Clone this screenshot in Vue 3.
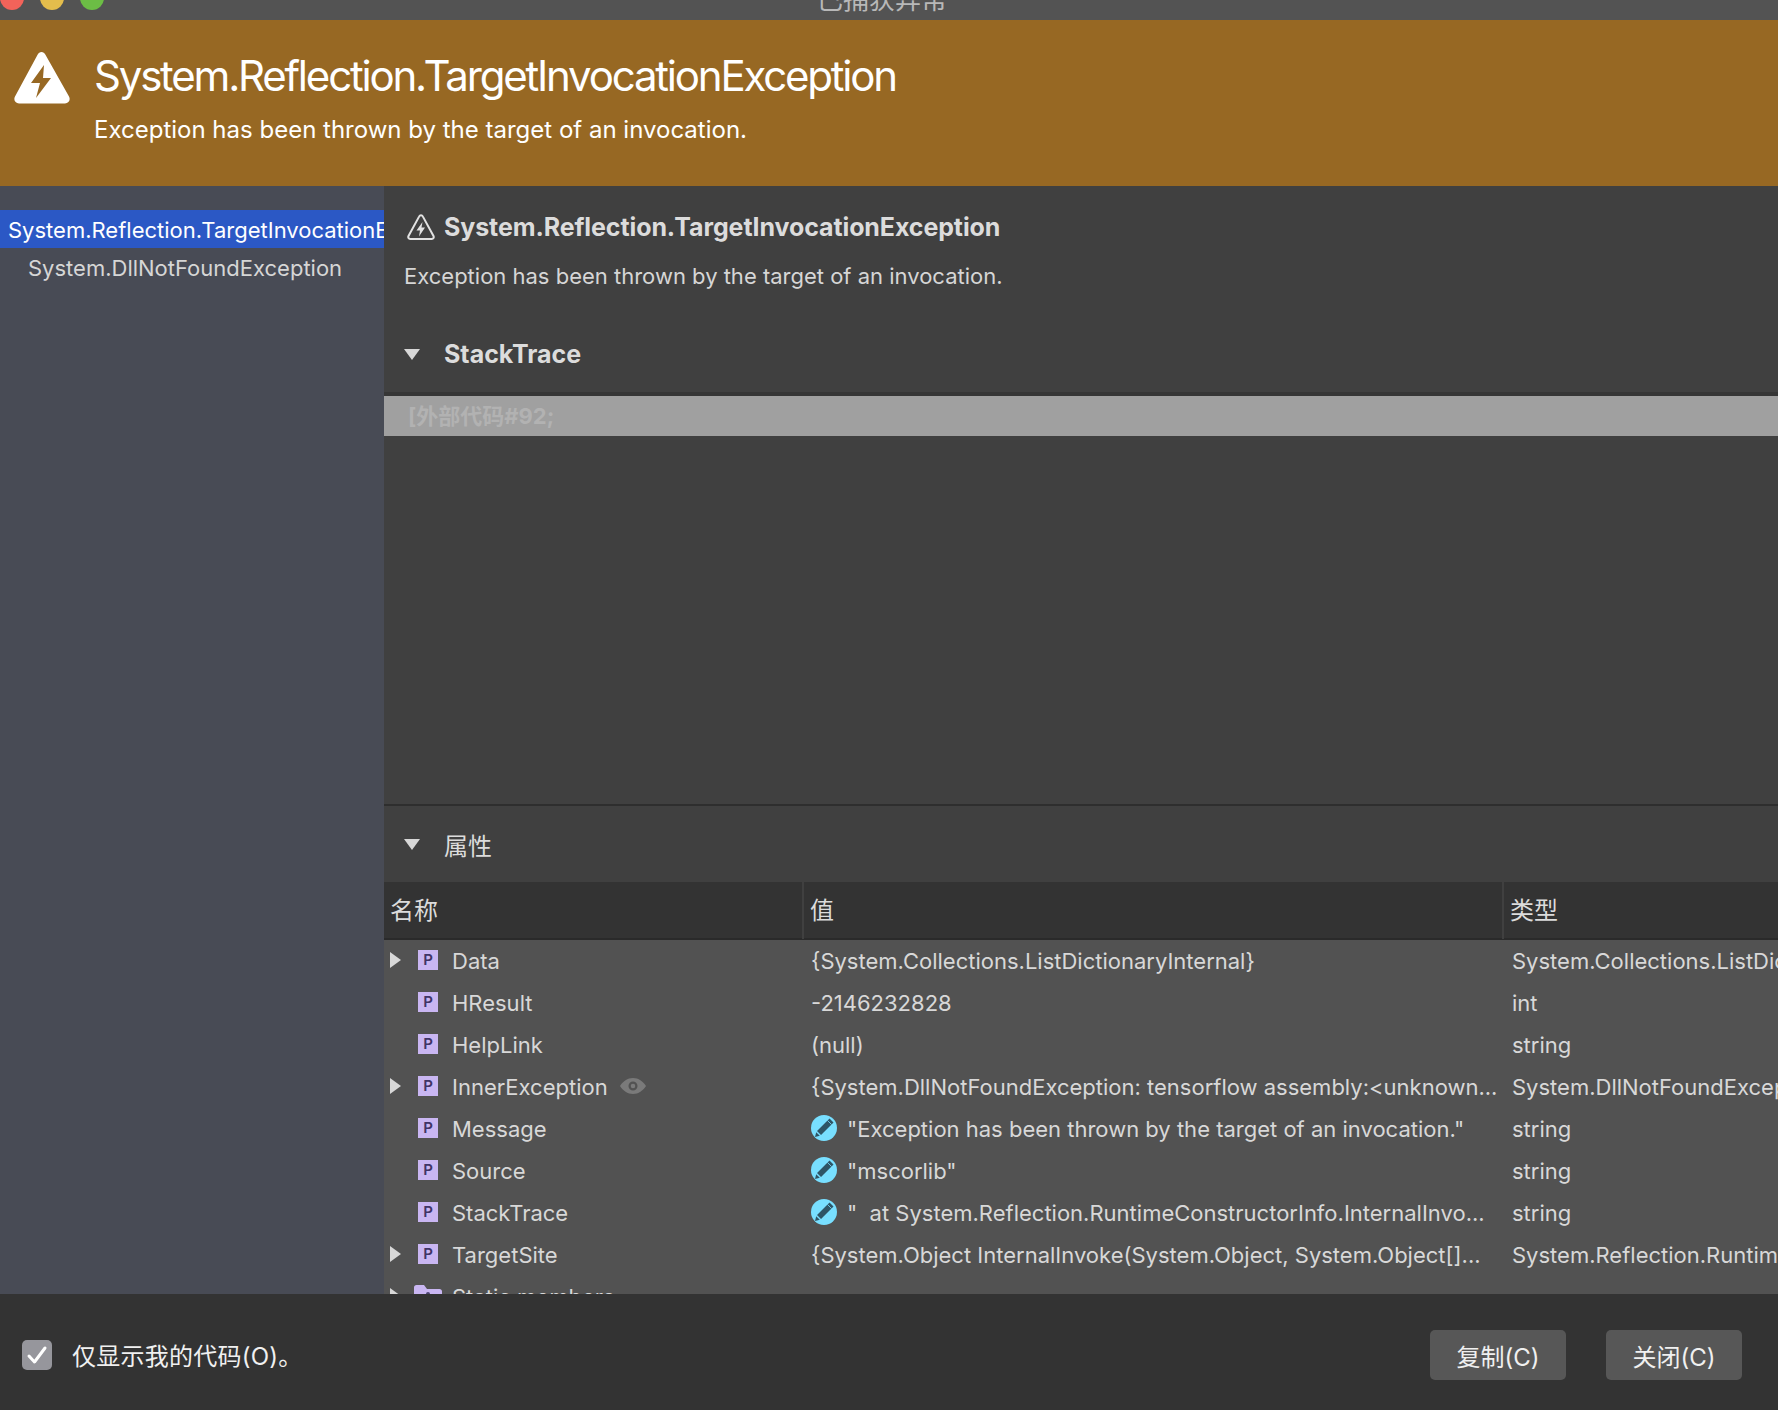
<script setup>
const rows = [
  { name: 'Data', value: '{System.Collections.ListDictionaryInternal}', type: 'System.Collections.ListDictionaryInternal', arrow: true },
  { name: 'HResult', value: '-2146232828', type: 'int' },
  { name: 'HelpLink', value: '(null)', type: 'string' },
  { name: 'InnerException', value: '{System.DllNotFoundException: tensorflow assembly:<unknown...', type: 'System.DllNotFoundException', arrow: true, eye: true },
  { name: 'Message', value: '"Exception has been thrown by the target of an invocation."', type: 'string', pencil: true },
  { name: 'Source', value: '"mscorlib"', type: 'string', pencil: true },
  { name: 'StackTrace', value: '"\u00a0\u00a0at System.Reflection.RuntimeConstructorInfo.InternalInvo...', type: 'string', pencil: true },
  { name: 'TargetSite', value: '{System.Object InternalInvoke(System.Object, System.Object[]...', type: 'System.Reflection.RuntimeMethodInfo', arrow: true },
  { name: 'Static members', value: '', type: '', arrow: true, folder: true }
]
</script>

<template>
  <div class="window">
    <div class="titlebar">
      <div class="lights">
        <span class="light red"></span>
        <span class="light yellow"></span>
        <span class="light green"></span>
      </div>
      <div class="wintitle">已捕获异常</div>
    </div>

    <header class="banner">
      <svg class="banner-icon" viewBox="0 0 56 52">
        <path fill="#fff" fill-rule="evenodd" d="M27.500 0c1.700 0 3 .9 3.800 2.500L55 44.500c1.800 3.500-.2 7-4 7H5c-3.800 0-5.800-3.500-4-7L23.700 2.500C24.500.9 25.800 0 27.500 0ZM30 13 17 31h9l-4 15 15-20h-8l1-13Z"/>
      </svg>
      <div class="banner-text">
        <h1>System.Reflection.TargetInvocationException</h1>
        <p>Exception has been thrown by the target of an invocation.</p>
      </div>
    </header>

    <div class="body">
      <aside class="sidebar">
        <div class="ex-item selected">System.Reflection.TargetInvocationException</div>
        <div class="ex-item child">System.DllNotFoundException</div>
      </aside>

      <main class="content">
        <section class="detail">
          <div class="detail-title">
            <svg class="small-warn" viewBox="0 0 28 26">
              <path fill="none" stroke="#e2e2e2" stroke-width="2" d="M14 1.200c.8 0 1.400.4 1.800 1.200L26.500 22c.7 1.500-.1 3-1.700 3H3.200c-1.600 0-2.400-1.500-1.700-3L12.200 2.400c.4-.8 1-1.200 1.800-1.200Z"/>
              <path fill="#e2e2e2" d="M15.500 8 9.500 16.500h3.500l-1 6 6-9h-3.500l1-5.500Z"/>
            </svg>
            <span>System.Reflection.TargetInvocationException</span>
          </div>
          <p class="detail-msg">Exception has been thrown by the target of an invocation.</p>
          <div class="section-head stack-head">
            <span class="tri-down"></span>
            <span class="section-label">StackTrace</span>
          </div>
        </section>

        <div class="stack-rule"></div>
        <div class="stack-row">[外部代码#92;</div>
        <div class="stack-empty"></div>

        <div class="props-rule"></div>
        <div class="section-head props-head">
          <span class="tri-down"></span>
          <span class="section-label light-label">属性</span>
        </div>

        <div class="table-head">
          <div class="th name-col">名称</div>
          <div class="th value-col">值</div>
          <div class="th">类型</div>
        </div>

        <div class="table-body">
          <div v-for="row in rows" :key="row.name" class="row">
            <div class="cell-name">
              <span class="arrow-slot"><span v-if="row.arrow" class="tri-right"></span></span>
              <svg v-if="row.folder" class="folder" viewBox="0 0 28 22">
                <path fill="#c9b6f2" d="M0 2.500C0 1 1 0 2.500 0H10l3 4h12.500C27 4 28 5 28 6.500V22H0Z"/>
                <circle cx="14" cy="9" r="2" fill="#4b4370"/>
              </svg>
              <span v-else class="p-icon">P</span>
              <span class="name-text">{{ row.name }}</span>
              <svg v-if="row.eye" class="eye" viewBox="0 0 26 16">
                <path fill="#7a7a7a" fill-rule="evenodd" d="M13 0c5.500 0 10 3.400 13 8-3 4.600-7.500 8-13 8S3 12.600 0 8c3-4.600 7.500-8 13-8Zm0 3.500a4.500 4.500 0 1 0 0 9 4.500 4.500 0 0 0 0-9Zm0 2.200a2.300 2.300 0 1 1 0 4.600 2.300 2.300 0 0 1 0-4.600Z"/>
              </svg>
            </div>
            <div class="cell-value">
              <span v-if="row.pencil" class="pencil">
                <svg viewBox="0 0 26 26">
                  <path fill="#2e5566" d="m18.500 3.500 4 4L10 20l-4-4L18.500 3.500ZM5.200 17.200l3.600 3.600-4.800 1.200 1.200-4.800Z"/>
                  <path stroke="#78dfff" stroke-width=".8" d="m16.500 5.500 4 4"/>
                </svg>
              </span>
              <span class="value-text">{{ row.value }}</span>
            </div>
            <div class="cell-type">{{ row.type }}</div>
          </div>
        </div>
      </main>
    </div>

    <footer class="footer">
      <label class="check">
        <span class="checkbox">
          <svg viewBox="0 0 30 30"><path fill="none" stroke="#fff" stroke-width="3" stroke-linecap="round" stroke-linejoin="round" d="m7 16 5.500 6L23 8"/></svg>
        </span>
        <span class="check-label">仅显示我的代码(O)。</span>
      </label>
      <div class="buttons">
        <button class="btn">复制(C)</button>
        <button class="btn">关闭(C)</button>
      </div>
    </footer>
  </div>
</template>

<style>
html, body { margin: 0; background: #333; }
</style>

<style scoped>
.window {
  width: 1778px;
  height: 1410px;
  display: flex;
  flex-direction: column;
  overflow: hidden;
  font-family: Inter, "Noto Sans CJK SC", sans-serif;
  color: #dcdcdc;
  background: #333;
}
.titlebar {
  height: 20px;
  flex: none;
  background: #535353;
  overflow: hidden;
  display: grid;
  grid-template-columns: 1fr auto 1fr;
}
.lights {
  display: flex;
  gap: 16px;
  margin-top: -14px;
  height: 24px;
}
.light { width: 24px; height: 24px; border-radius: 50%; }
.red { background: #f2635a; }
.yellow { background: #e4bd4c; }
.green { background: #6cbd45; }
.wintitle {
  grid-column: 2;
  margin-top: -17px;
  padding-right: 14px;
  height: 30px;
  line-height: 30px;
  font-size: 26px;
  color: #b8b8b8;
  font-family: "Noto Sans CJK SC", sans-serif;
}
.banner {
  height: 166px;
  flex: none;
  background: #976823;
  display: flex;
  box-sizing: border-box;
  padding: 32px 0 0 14px;
  color: #fff;
}
.banner-icon { width: 56px; height: 52px; flex: none; margin-right: 24px; }
.banner-text h1 {
  margin: -1px 0 0;
  font-size: 42px;
  line-height: 50px;
  font-weight: 400;
  letter-spacing: -2.2px;
  white-space: nowrap;
}
.banner-text p {
  margin: 14px 0 0;
  font-size: 24px;
  line-height: 30px;
}
.body { flex: 1; min-height: 0; display: flex; }
.sidebar {
  width: 384px;
  flex: none;
  background: #484b55;
  padding-top: 24px;
  box-sizing: border-box;
  overflow: hidden;
}
.ex-item {
  height: 38px;
  line-height: 40px;
  font-size: 22px;
  white-space: nowrap;
  overflow: hidden;
}
.selected { background: #2b58c5; color: #fff; padding-left: 8px; }
.child { padding-left: 28px; color: #d6d6d6; }
.content {
  flex: 1;
  min-width: 0;
  background: #404040;
  display: flex;
  flex-direction: column;
  overflow: hidden;
}
.detail { height: 206px; flex: none; box-sizing: border-box; padding: 25px 0 0 20px; }
.detail-title {
  display: flex;
  align-items: center;
  height: 32px;
  font-size: 25px;
  font-weight: 700;
  letter-spacing: -0.1px;
  color: #dcdcdc;
  white-space: nowrap;
}
.small-warn { width: 28px; height: 26px; margin: 0 9px 0 3px; flex: none; }
.detail-msg {
  margin: 18px 0 0;
  font-size: 22px;
  line-height: 30px;
  color: #d6d6d6;
}
.section-head { display: flex; align-items: center; }
.stack-head { height: 32px; margin-top: 47px; }
.tri-down {
  width: 0;
  height: 0;
  border-left: 8px solid transparent;
  border-right: 8px solid transparent;
  border-top: 11px solid #d8d8d8;
  margin-top: 1px;
  margin-right: 24px;
  flex: none;
}
.section-label { font-size: 25px; font-weight: 700; color: #dcdcdc; }
.light-label { font-weight: 400; font-size: 24px; }
.stack-rule { height: 4px; flex: none; background: #363636; }
.stack-row {
  height: 40px;
  line-height: 40px;
  flex: none;
  background: #a0a0a0;
  color: #b2b2b2;
  font-size: 22px;
  font-weight: 700;
  padding-left: 24px;
}
.stack-empty { flex: 1; min-height: 0; }
.props-rule { height: 2px; flex: none; background: #2e2e2e; }
.props-head { height: 76px; flex: none; padding-left: 20px; box-sizing: border-box; }
.table-head {
  height: 58px;
  flex: none;
  display: grid;
  grid-template-columns: 420px 700px 1fr;
  background: #333;
  border-bottom: 2px solid #2a2a2a;
  box-sizing: border-box;
}
.th {
  padding-left: 6px;
  line-height: 57px;
  font-size: 24px;
  color: #dcdcdc;
}
.name-col, .value-col { border-right: 2px solid #404040; box-sizing: border-box; }
.table-body {
  height: 354px;
  flex: none;
  background: #525252;
  padding-top: 1px;
  box-sizing: border-box;
  overflow: hidden;
}
.row {
  height: 42px;
  display: grid;
  grid-template-columns: 418px 701px 1fr;
  font-size: 22px;
  color: #d8d8d8;
  white-space: nowrap;
}
.cell-name { display: flex; align-items: center; }
.arrow-slot { width: 34px; flex: none; margin-bottom: 4px; padding-left: 6px; box-sizing: border-box; }
.tri-right {
  display: block;
  width: 0;
  height: 0;
  border-top: 8px solid transparent;
  border-bottom: 8px solid transparent;
  border-left: 11px solid #d8d8d8;
}
.p-icon {
  width: 20px;
  height: 20px;
  margin-bottom: 4px;
  background: #c9b6f2;
  color: #3f3466;
  font-size: 15px;
  font-weight: 600;
  line-height: 19px;
  text-align: center;
  flex: none;
}
.folder { width: 28px; height: 22px; margin: 0 10px 4px -4px; flex: none; }
.name-text { margin: 0 0 2px 14px; }
.folder + .name-text { margin-left: 0; }
.eye { width: 26px; height: 16px; margin: 0 0 4px 12px; flex: none; }
.cell-value {
  display: flex;
  align-items: center;
  padding-left: 9px;
  overflow: hidden;
}
.value-text { margin-bottom: 2px; }
.pencil {
  width: 26px;
  height: 26px;
  border-radius: 50%;
  background: #78dfff;
  margin-right: 10px;
  margin-bottom: 4px;
  flex: none;
  display: block;
}
.pencil svg { width: 26px; height: 26px; display: block; }
.cell-type { padding-left: 9px; line-height: 40px; }
.footer {
  height: 116px;
  flex: none;
  background: #333;
  display: flex;
  align-items: center;
  justify-content: space-between;
  padding: 6px 36px 0 22px;
  box-sizing: border-box;
}
.check { display: flex; align-items: center; font-size: 24px; color: #f0f0f0; }
.check-label { letter-spacing: 0.25px; margin-bottom: 1px; }
.checkbox {
  width: 30px;
  height: 30px;
  border-radius: 5px;
  background: #96969c;
  margin-right: 20px;
}
.checkbox svg { width: 30px; height: 30px; display: block; }
.buttons { display: flex; gap: 40px; }
.btn {
  width: 136px;
  height: 50px;
  border: 0;
  border-radius: 5px;
  background: #575757;
  color: #f0f0f0;
  font: inherit;
  font-size: 24px;
}
</style>
